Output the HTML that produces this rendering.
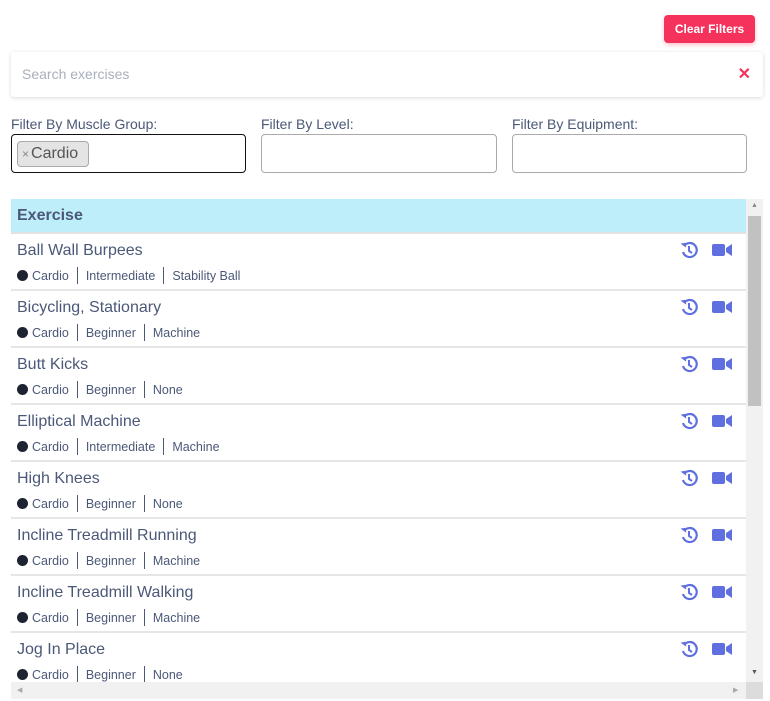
<!DOCTYPE html>
<html><head><style>
*{box-sizing:border-box;margin:0;padding:0}
body{width:770px;height:701px;background:#fff;font-family:"Liberation Sans",sans-serif;color:#4b5877;position:relative;overflow:hidden}
.btn{position:absolute;left:664px;top:15px;width:91px;height:28px;background:#f5325c;color:#fff;font-size:12px;font-weight:bold;border-radius:4px;text-align:center;line-height:28px;box-shadow:0 2px 4px rgba(245,50,92,.3)}
.search{position:absolute;left:11px;top:52px;width:752px;height:45px;background:#fff;box-shadow:0 1px 4px rgba(0,0,0,.15);border-radius:3px}
.search span{position:absolute;left:11px;top:14px;font-size:14px;color:#a9afbb}
.search b{position:absolute;right:12px;top:12px;color:#f5325c;font-size:16px}
.lbl{position:absolute;top:116px;font-size:14px;color:#4b5877}
.box{position:absolute;top:134px;width:236px;height:39px;border:1px solid #aaa;border-radius:4px}
.tag{position:absolute;left:5px;top:6px;height:26px;width:72px;background:#e4e4e4;border:1px solid #aaa;border-radius:4px;font-size:16px;line-height:24px;padding-left:4px;color:#555}
.tag i{font-style:normal;font-size:12px;color:#888;margin-right:2px}
.tbl{position:absolute;left:11px;top:199px;width:752px;height:501px;overflow:hidden}
.hd{position:absolute;left:0;top:0;width:735px;height:35px;background:#bdeef9;font-weight:bold;font-size:16px;padding:8px 6px;border-bottom:2px solid #e2e2e2}
.row{position:absolute;left:0;width:735px;height:57px;border-bottom:2px solid #e6e6e6}
.row .t{position:absolute;left:6px;top:8px;font-size:16px}
.row .m{position:absolute;left:6px;top:33px;font-size:12.5px;white-space:nowrap}
.dot{display:inline-block;width:11px;height:11px;border-radius:50%;background:#1d2330;vertical-align:-1px;margin-right:4px}
.sep{display:inline-block;width:1px;height:17px;background:#4b5877;vertical-align:-4px;margin:0 8px}
.ic{position:absolute;top:7px}
.vs{position:absolute;left:735px;top:0;width:17px;height:483px;background:#f1f1f1}
.vs div{position:absolute;left:2px;top:17px;width:13px;height:190px;background:#c1c1c1}
.hs{position:absolute;left:0;top:483px;width:735px;height:17px;background:#f1f1f1}
.cr{position:absolute;left:735px;top:483px;width:17px;height:17px;background:#dcdcdc}
</style></head><body>
<div class="btn">Clear Filters</div>
<div class="search"><span>Search exercises</span><b>✕</b></div>
<div class="lbl" style="left:11px">Filter By Muscle Group:</div>
<div class="lbl" style="left:261px">Filter By Level:</div>
<div class="lbl" style="left:512px">Filter By Equipment:</div>
<div class="box" style="left:11px;width:235px;border:1px solid #111"><div class="tag"><i>×</i>Cardio</div></div>
<div class="box" style="left:261px"></div>
<div class="box" style="left:512px;width:235px"></div>
<div class="tbl">
<div class="hd">Exercise</div>
<div id="rows"></div>
<div class="vs"><div></div><span style="position:absolute;left:5px;top:3px;font-size:7px;color:#888">▲</span><span style="position:absolute;left:5px;top:470px;font-size:7px;color:#555">▼</span></div>
<div class="hs"><span style="position:absolute;left:6px;top:4px;font-size:7px;color:#aaa">◀</span><span style="position:absolute;left:722px;top:4px;font-size:7px;color:#aaa">▶</span></div>
<div class="cr"></div>
</div>
<script>
var d=[["Ball Wall Burpees","Intermediate","Stability Ball"],["Bicycling, Stationary","Beginner","Machine"],["Butt Kicks","Beginner","None"],["Elliptical Machine","Intermediate","Machine"],["High Knees","Beginner","None"],["Incline Treadmill Running","Beginner","Machine"],["Incline Treadmill Walking","Beginner","Machine"],["Jog In Place","Beginner","None"]];
var h="";
var hist='<svg class="ic" style="left:669px" width="18" height="18" viewBox="0 0 18 18"><path d="M4 5A7 7 0 1 1 3 11" fill="none" stroke="#5f6fe0" stroke-width="2.2"/><path d="M1 2L6 2L6 7Z" fill="#5f6fe0" transform="rotate(-10 4 5)"/><path d="M9 5v5l3 2" fill="none" stroke="#5f6fe0" stroke-width="2"/></svg>';
var cam='<svg class="ic" style="left:701px;top:9px" width="20" height="14" viewBox="0 0 20 14"><rect x="0" y="1" width="13" height="12" rx="2" fill="#5f6fe0"/><path d="M14 5L20 1V13L14 9Z" fill="#5f6fe0"/></svg>';
d.forEach(function(r,i){h+='<div class="row" style="top:'+(35+i*57)+'px"><div class="t">'+r[0]+'</div><div class="m"><span class="dot"></span>Cardio<span class="sep"></span>'+r[1]+'<span class="sep"></span>'+r[2]+'</div>'+hist+cam+'</div>';});
document.getElementById("rows").innerHTML=h;
</script>
</body></html>
